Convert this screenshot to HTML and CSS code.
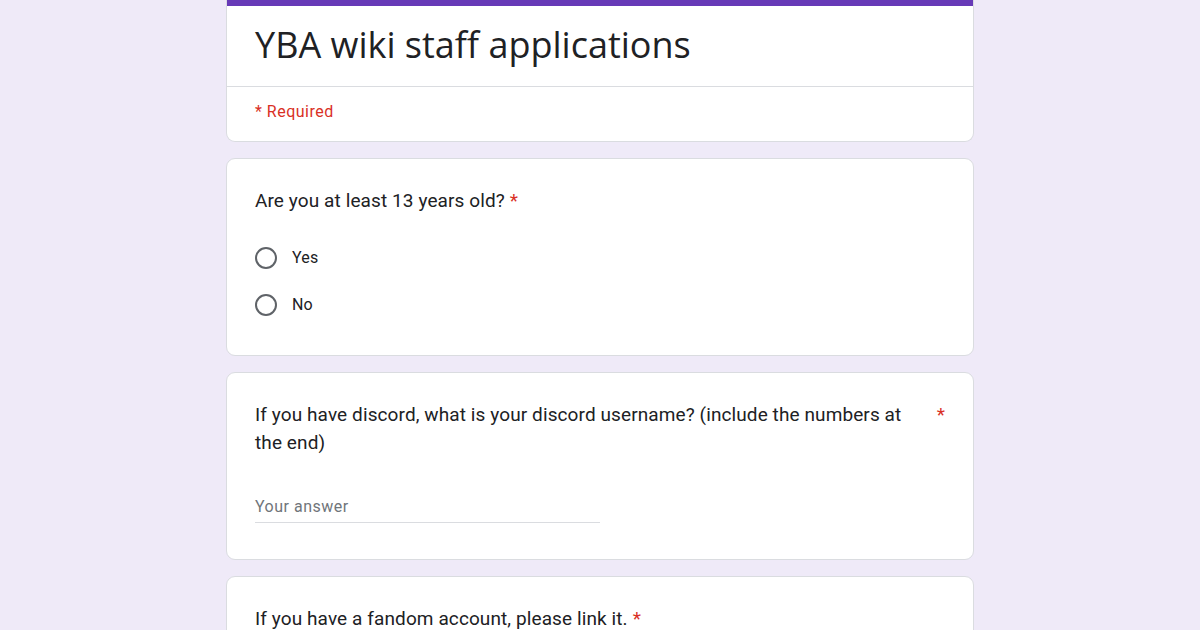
FILE: index.html
```html
<!DOCTYPE html>
<html lang="en">
<head>
<meta charset="utf-8">
<title>YBA wiki staff applications</title>
<link rel="stylesheet" href="styles.css">
</head>
<body>
<main class="form">
  <section class="card header-card">
    <div class="accent"></div>
    <h1 class="title">YBA wiki staff applications</h1>
    <div class="divider"></div>
    <div class="required-note">* Required</div>
  </section>

  <section class="card question">
    <div class="q-title"><span class="q-text">Are you at least 13 years old?</span><span class="star">*</span></div>
    <div class="options">
      <label class="option"><span class="radio"></span><span class="opt-label">Yes</span></label>
      <label class="option"><span class="radio"></span><span class="opt-label">No</span></label>
    </div>
  </section>

  <section class="card question">
    <div class="q-title"><span class="q-text">If you have discord, what is your discord username? (include the numbers at the end)</span><span class="star">*</span></div>
    <div class="answer">Your answer</div>
  </section>

  <section class="card question">
    <div class="q-title"><span class="q-text">If you have a fandom account, please link it.</span><span class="star">*</span></div>
    <div class="answer">Your answer</div>
  </section>
</main>
</body>
</html>
```

FILE: styles.css
```css
html, body {
  margin: 0;
  padding: 0;
  background: #efeaf8;
  height: 630px;
  overflow: hidden;
}

body {
  font-family: Roboto, "Liberation Sans", Arial, sans-serif;
  color: #202124;
}

.form {
  width: 748px;
  margin: -10px auto 0;
  display: flex;
  flex-direction: column;
  gap: 16px;
}

.card {
  background: #fff;
  border: 1px solid #dadce0;
  border-radius: 9px;
  box-sizing: border-box;
}

.header-card {
  overflow: hidden;
  border-top: none;
}

.accent {
  height: 16px;
  background: #673ab7;
}

.title {
  margin: 0;
  padding: 13px 28px 0;
  height: 67px;
  font-family: "Open Sans", Roboto, sans-serif;
  font-weight: 400;
  font-size: 36px;
  line-height: 52px;
  color: #202124;
  letter-spacing: 0;
}

.divider {
  height: 1px;
  background: #dadce0;
}

.required-note {
  padding: 15px 28px 19px;
  font-size: 16px;
  line-height: 20px;
  letter-spacing: 0.5px;
  color: #d93025;
}

.question {
  padding: 28px 28px 0;
}

.q-title {
  display: flex;
  align-items: flex-start;
  font-size: 19px;
  line-height: 28px;
  letter-spacing: 0.1px;
}

.star {
  color: #d93025;
  padding-left: 5px;
}

.options {
  display: flex;
  flex-direction: column;
  padding: 31px 0 39px;
  gap: 24px;
}

.option {
  display: flex;
  align-items: center;
  height: 23px;
}

.radio {
  width: 18px;
  height: 18px;
  border: 2px solid #5f6368;
  border-radius: 50%;
  margin-right: 15px;
}

.opt-label {
  font-size: 16px;
  letter-spacing: 0.2px;
}

.answer {
  width: 345px;
  margin-top: 39px;
  margin-bottom: 36px;
  padding-bottom: 4px;
  border-bottom: 1px solid #dadce0;
  font-size: 16px;
  line-height: 22px;
  color: #70757a;
  letter-spacing: 0.5px;
}
```
